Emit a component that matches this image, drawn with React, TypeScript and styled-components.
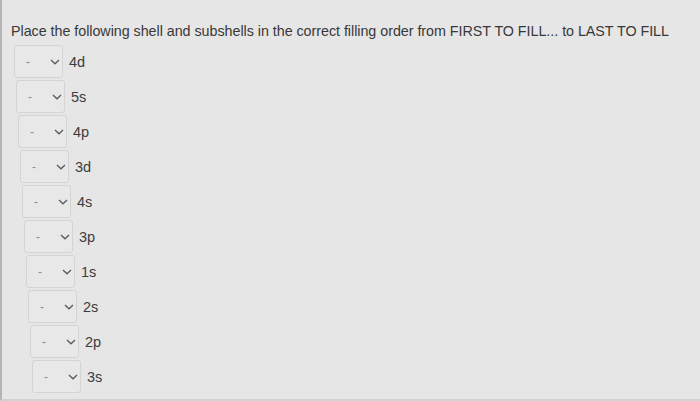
import styled, { createGlobalStyle } from "styled-components";

const subshells = ["4d", "5s", "4p", "3d", "4s", "3p", "1s", "2s", "2p", "3s"];

const GlobalStyle = createGlobalStyle`
  body {
    margin: 0;
    font-family: "Liberation Sans", Arial, sans-serif;
  }
`;

const App: React.FC = () => {
  return (
    <>
      <GlobalStyle />
      <StyledPage>
        <StyledPrompt>
          Place the following shell and subshells in the correct filling order
          from FIRST TO FILL... to LAST TO FILL
        </StyledPrompt>
        <StyledList>
          {subshells.map((name, i) => (
            <StyledRow key={name} $indent={12 + i * 2}>
              <StyledSelect>
                <StyledDash>-</StyledDash>
                <Chevron />
              </StyledSelect>
              <StyledLabel>{name}</StyledLabel>
            </StyledRow>
          ))}
        </StyledList>
      </StyledPage>
    </>
  );
};

const Chevron = () => (
  <svg width="10" height="6" viewBox="0 0 10 6" fill="none">
    <path d="M1 1l4 3.8L9 1" stroke="#5a5a5a" strokeWidth="1.3" />
  </svg>
);

export default App;

const StyledPage = styled.div`
  width: 700px;
  height: 401px;
  box-sizing: border-box;
  background: #e6e6e6;
  border-left: 2px solid #b4b4b4;
  border-bottom: 2px solid #d2d2d2;
  overflow: hidden;
  padding-top: 22px;
`;

const StyledPrompt = styled.p`
  margin: 0 0 5px 9px;
  font-size: 14.3px;
  line-height: 18px;
  color: #383838;
  letter-spacing: -0.03px;
  white-space: nowrap;
`;

const StyledList = styled.div`
  display: flex;
  flex-direction: column;
  gap: 2px;
`;

const StyledRow = styled.div<{ $indent: number }>`
  display: flex;
  align-items: center;
  gap: 6px;
  padding-left: ${(p) => p.$indent}px;
`;

const StyledSelect = styled.div`
  width: 49px;
  height: 33px;
  box-sizing: border-box;
  border: 1px solid #d4d4d4;
  border-radius: 3px;
  background: #e8e8e8;
  display: flex;
  align-items: center;
  justify-content: space-between;
  padding: 0 2px 0 11px;
`;

const StyledDash = styled.span`
  font-size: 12px;
  color: #8a8a8a;
`;

const StyledLabel = styled.span`
  font-size: 14.5px;
  color: #3c3c3c;
`;
